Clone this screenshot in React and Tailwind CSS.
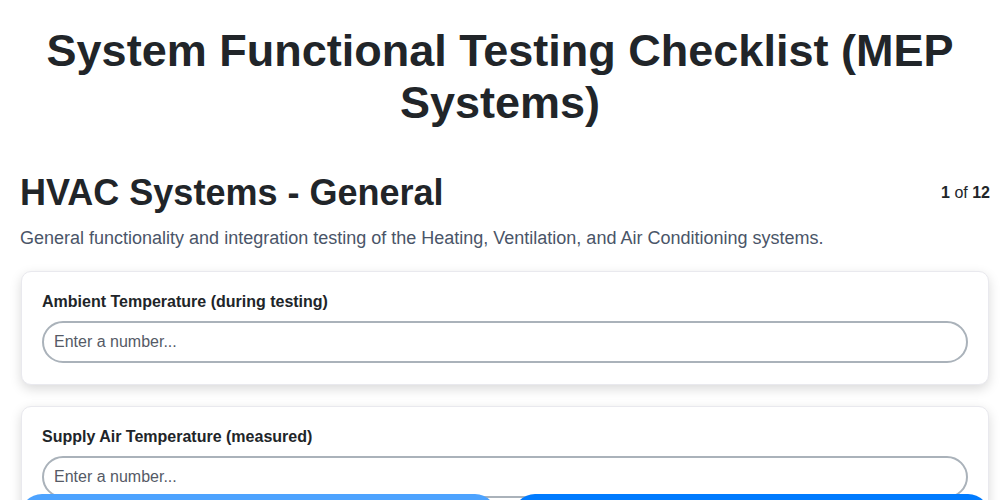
export default function App() {
  const fields = [
    { label: 'Ambient Temperature (during testing)' },
    { label: 'Supply Air Temperature (measured)' },
  ];

  return (
    <div className="min-h-screen bg-white text-[#212529] font-['Liberation_Sans',Arial,sans-serif]">
      <h1 className="pt-[25px] px-10 text-center text-[45px] leading-[1.16] font-bold">
        System Functional Testing Checklist (MEP Systems)
      </h1>

      <div className="pl-5 pr-2.5 mt-[42px]">
        {/* section header */}
        <div className="flex items-center justify-between">
          <h2 className="text-[36px] leading-[1.2] font-bold">HVAC Systems - General</h2>
          <span className="text-base">
            <b>1</b> of <b>12</b>
          </span>
        </div>
        <p className="mt-[10px] text-[18px] leading-[1.5] text-[#4a5568]">
          General functionality and integration testing of the Heating, Ventilation, and Air Conditioning systems.
        </p>

        {/* fields */}
        <div className="mt-[19px] flex flex-col gap-[21px] pb-24">
          {fields.map((f) => (
            <div
              key={f.label}
              className="mx-px rounded-[10px] border border-[#e9e9ee] bg-white px-5 pt-[21px] pb-[21px] shadow-[0_4px_12px_rgba(0,0,0,0.15)]"
            >
              <label className="block text-[16px] leading-[18px] font-bold mb-[10px]">{f.label}</label>
              <input
                type="text"
                placeholder="Enter a number..."
                className="block w-full h-[42px] rounded-full border-2 border-[#aab2ba] px-[10px] text-base text-[#212529] placeholder:text-[#555a66] outline-none"
              />
            </div>
          ))}
        </div>
      </div>

      {/* nav buttons */}
      <div className="fixed left-0 right-0 top-[494px] pl-5 pr-2.5 flex gap-4">
        <button className="flex-1 h-11 rounded-full bg-[#4da3ff] text-white font-bold">Previous</button>
        <button className="flex-1 h-11 rounded-full bg-[#007bff] text-white font-bold">Next</button>
      </div>
    </div>
  );
}
